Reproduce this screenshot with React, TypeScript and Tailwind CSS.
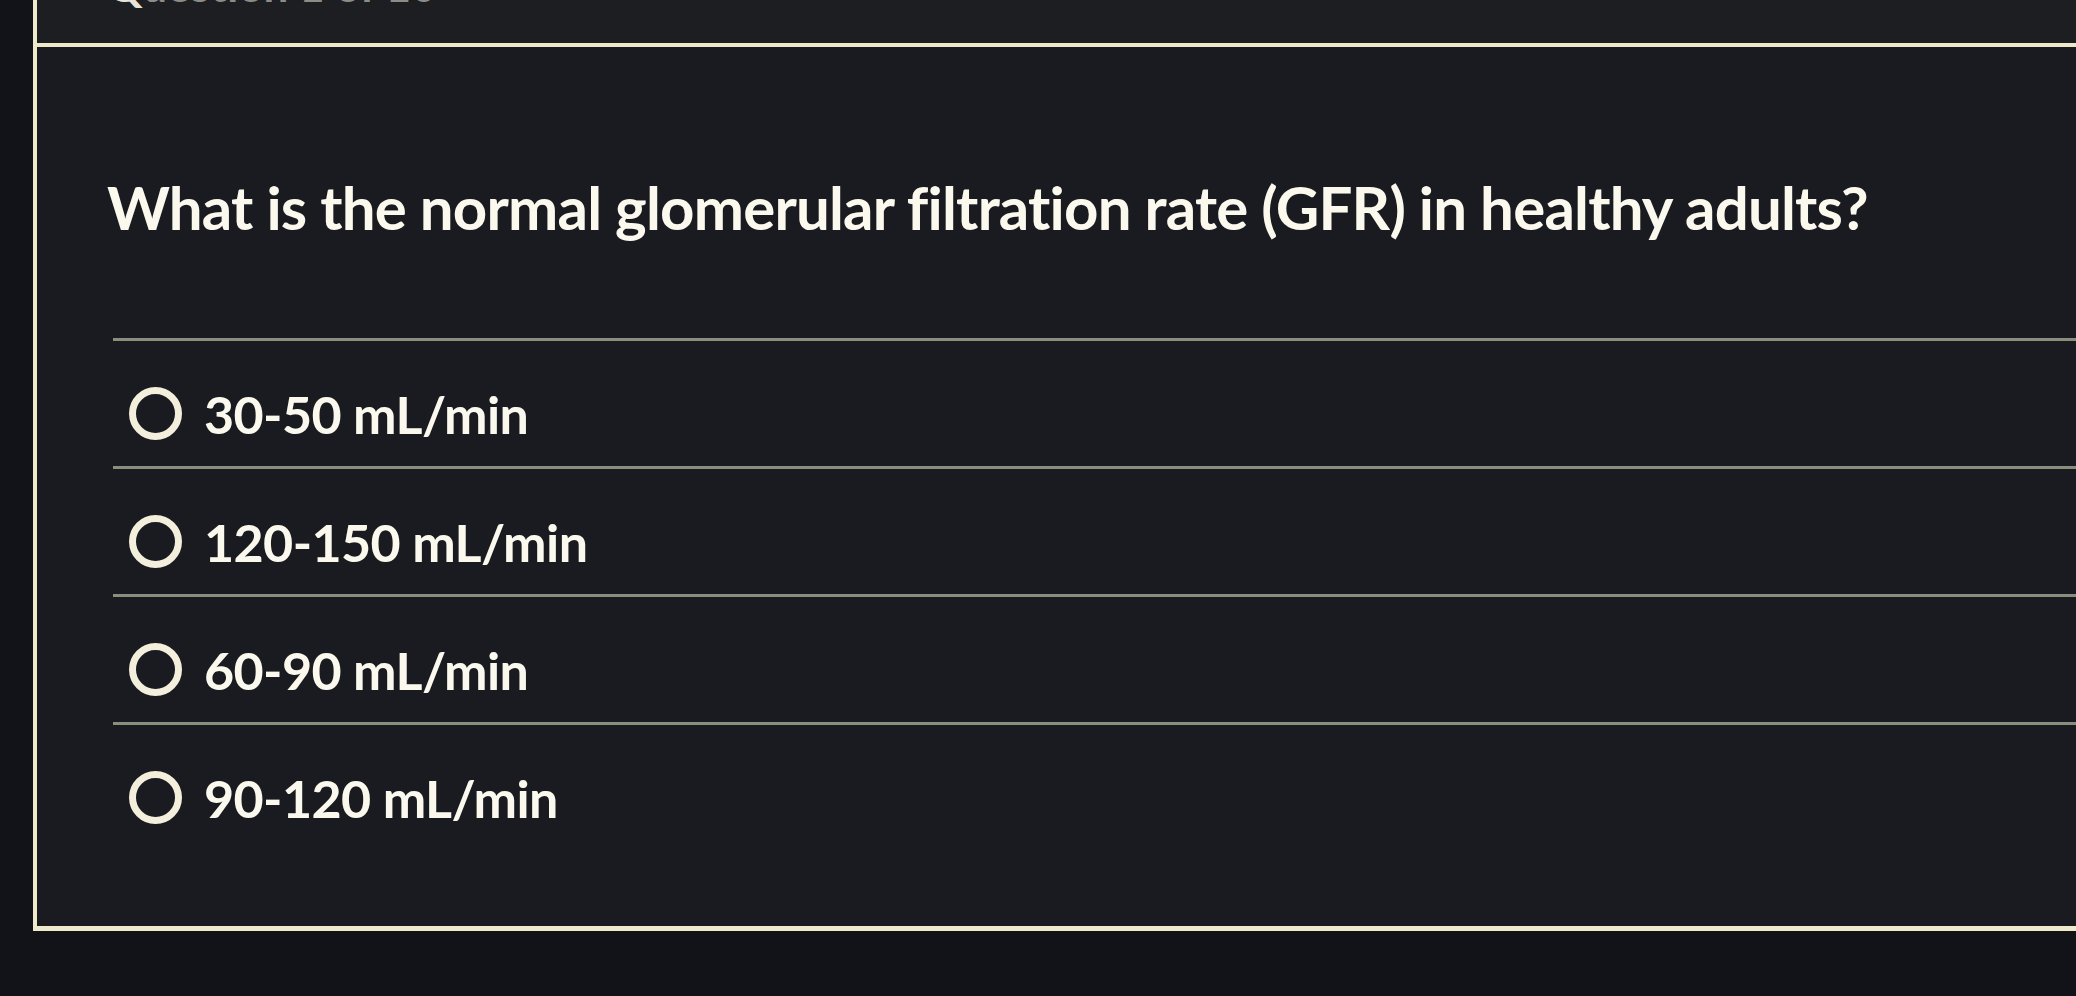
import React from "react";

const options = ["30-50 mL/min", "120-150 mL/min", "60-90 mL/min", "90-120 mL/min"];

export default function App() {
  return (
    <div
      className="w-[2076px] h-[996px] overflow-hidden bg-[#121318] flex flex-col"
      style={{ fontFamily: "Lato, 'Open Sans', sans-serif" }}
    >
      <div className="ml-[33px] h-[931px] border-l-[4px] border-b-[5px] border-[#eeeacb] bg-[#1a1b20] flex flex-col">
        <div className="h-[43px] overflow-hidden bg-[#1d1e22] pl-[70px]">
          <div className="mt-[-40px] text-[44px] font-bold leading-[50px] text-[#8d8c86]">
            <span className="text-[#e8e4d6]">Q</span>uestion 1 of 10
          </div>
        </div>
        <div className="h-[4px] bg-[#ece8c8]" />
        <div className="flex flex-col pl-[70px]">
          <h1 className="mt-[124px] text-[60px] font-bold leading-[1.2] text-[#fbf8ee] tracking-[-0.8px]">
            What is the normal glomerular filtration rate (GFR) in healthy adults?
          </h1>
          <div className="mt-[95px] ml-[6px] flex flex-col">
            {options.map((o) => (
              <div key={o} className="flex flex-col">
                <div className="h-[3px] bg-[#8b8d7d]" />
                <div className="h-[125px] pt-[20px] flex items-center gap-[22px] pl-[16px]">
                  <span className="w-[53px] h-[53px] rounded-full border-[7px] border-[#f3efdc] shrink-0" />
                  <span className="text-[52px] font-bold text-[#fbf8ee] leading-none tracking-[-0.6px]">{o}</span>
                </div>
              </div>
            ))}
          </div>
        </div>
      </div>
    </div>
  );
}
